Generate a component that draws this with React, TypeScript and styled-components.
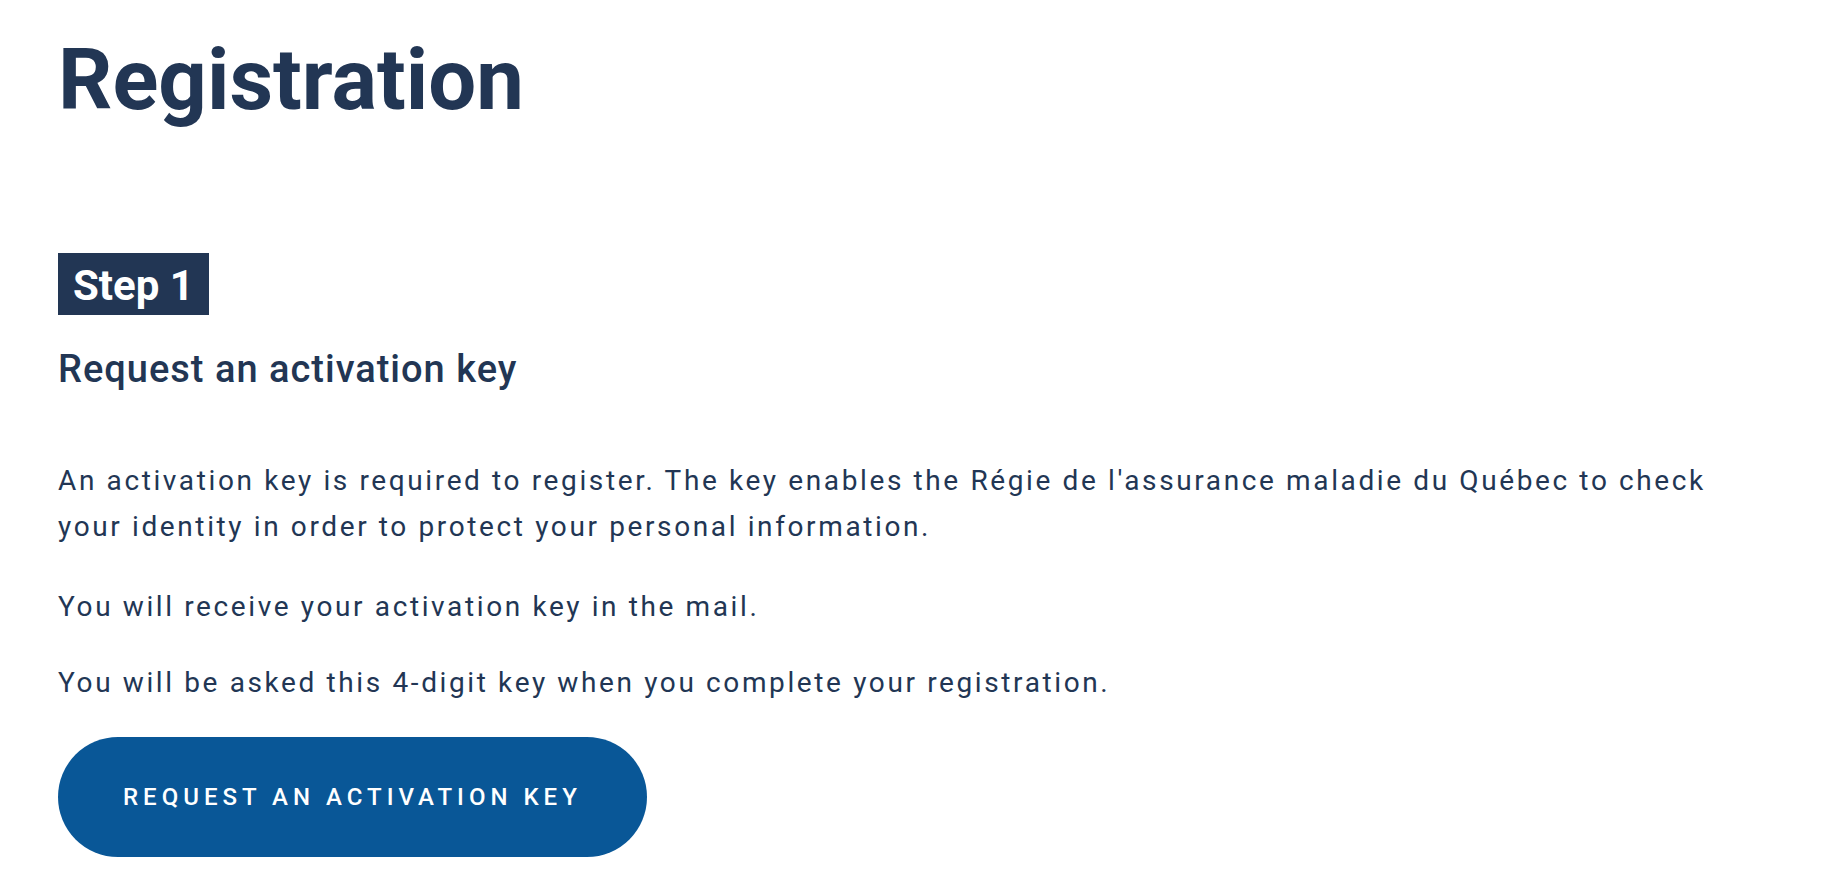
import styled, { createGlobalStyle } from "styled-components";

const GlobalStyle = createGlobalStyle`
  html, body {
    margin: 0;
    padding: 0;
    background: #fff;
  }
  body {
    font-family: Roboto, "Noto Sans", Arial, sans-serif;
    color: #223654;
  }
`;

const Page = styled.main`
  padding: 29px 58px 0;
`;

const Title = styled.h1`
  margin: 0;
  font-size: 85px;
  line-height: 1.2;
  font-weight: 700;
  color: #223654;
`;

const Section = styled.section`
  margin-top: 122px;
`;

const StepBadge = styled.span`
  display: inline-block;
  height: 62px;
  box-sizing: border-box;
  padding: 4px 15px 0;
  line-height: 58px;
  font-size: 42px;
  font-weight: 700;
  color: #fff;
  background: #223654;
`;

const StepTitle = styled.h2`
  margin: 30px 0 0;
  font-size: 38px;
  line-height: 1.3;
  font-weight: 500;
  letter-spacing: 1px;
  color: #223654;
`;

const Body = styled.div`
  margin-top: 64px;
`;

const Text = styled.p<{ $gap?: number }>`
  margin: 0 0 ${(p) => p.$gap ?? 30}px;
  max-width: 1720px;
  font-size: 28px;
  line-height: 46px;
  font-weight: 400;
  letter-spacing: 2.62px;
  &:last-child {
    margin-bottom: 0;
  }
`;

const Action = styled.button`
  margin-top: 31px;
  height: 120px;
  padding: 0 65px;
  border: 0;
  border-radius: 60px;
  background: #095797;
  color: #fff;
  font-family: Roboto, "Noto Sans", Arial, sans-serif;
  font-size: 24px;
  font-weight: 500;
  letter-spacing: 5px;
  text-transform: uppercase;
  cursor: pointer;
`;

export default function App() {
  return (
    <>
      <GlobalStyle />
      <Page>
        <Title>Registration</Title>
        <Section>
          <StepBadge>Step 1</StepBadge>
          <StepTitle>Request an activation key</StepTitle>
          <Body>
            <Text $gap={34}>
              An activation key is required to register. The key enables the Régie de
              l'assurance maladie du Québec to check your identity in order to protect your
              personal information.
            </Text>
            <Text>You will receive your activation key in the mail.</Text>
            <Text>You will be asked this 4-digit key when you complete your registration.</Text>
          </Body>
          <Action type="button">Request an activation key</Action>
        </Section>
      </Page>
    </>
  );
}
